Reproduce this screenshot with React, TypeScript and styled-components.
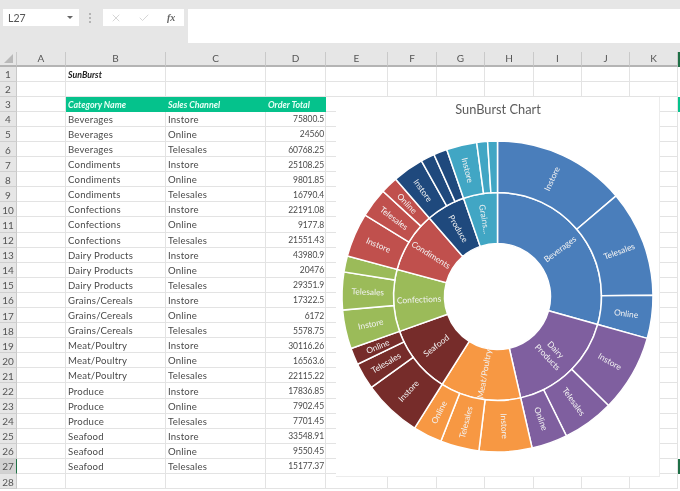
import React from "react";
import styled, { createGlobalStyle } from "styled-components";
import { X, Check } from "lucide-react";

const Global = createGlobalStyle`
  html, body { margin: 0; padding: 0; background: #fff; }
  body { font-family: "Lato", "Liberation Sans", sans-serif; overflow: hidden; }
`;

const Page = styled.div`
  width: 680px;
  height: 491px;
  overflow: hidden;
  background: #fff;
  filter: blur(0.3px);
`;

const FormulaArea = styled.div`
  height: 43px;
  padding-top: 9px;
  box-sizing: content-box;
  background: #e6e6e6;
  border-top: 1px solid #f3f3f3;
  margin-top: -1px;
  display: flex;
  align-items: flex-start;
`;

const NameBox = styled.div`
  width: 76px;
  height: 17px;
  margin-left: 3px;
  background: #fff;
  display: flex;
  align-items: center;
  justify-content: space-between;
  padding: 0 6px 0 5px;
  box-sizing: border-box;
  font-size: 10.5px;
  color: #555;
`;

const Caret = styled.span`
  width: 0;
  height: 0;
  border-left: 3px solid transparent;
  border-right: 3px solid transparent;
  border-top: 3px solid #666;
`;

const Grip = styled.div`
  width: 2px;
  height: 10px;
  margin: 4px 12px 0 10px;
  background: repeating-linear-gradient(#b4b4b4 0 2px, transparent 2px 4px);
`;

const IconBox = styled.div`
  width: 81px;
  height: 17px;
  background: #fff;
  display: flex;
  align-items: center;
  padding-left: 7px;
  gap: 16px;
  box-sizing: border-box;
  color: #c8c8c8;
`;

const Fx = styled.span`
  font-family: "Liberation Serif", serif;
  font-style: italic;
  font-weight: 700;
  font-size: 10px;
  color: #666;
  margin-left: 1px;
`;

const FormulaInput = styled.div`
  flex: 1;
  height: 34px;
  margin-left: 4px;
  background: #fff;
`;

const Sheet = styled.div`
  position: relative;
  display: grid;
  grid-template-columns: 17px 49px 100px 100px 60px 62px 49px 48px 49px 48px 48px 48px 2px;
  grid-auto-rows: 15.1px;
  grid-template-rows: 14.5px;
  color: #4a4a4a;
  font-size: 9.6px;
`;

const ColHead = styled.div`
  background: #e6e6e6;
  border-right: 1px solid #c9c9c9;
  border-bottom: 2px solid #b4b4b4;
  display: flex;
  align-items: center;
  justify-content: center;
  font-size: 10px;
  color: #555;
  box-sizing: border-box;
`;

const Corner = styled(ColHead)`
  position: relative;
`;

const CornerMark = styled.span`
  width: 0;
  height: 0;
  margin: 1px 0 0 1px;
  border-left: 9px solid transparent;
  border-bottom: 9px solid #b9b9b9;
`;

const RowHead = styled.div<{ $active?: boolean }>`
  background: ${(p) => (p.$active ? "#d2d2d2" : "#e6e6e6")};
  border-bottom: 1px solid #cfcfcf;
  border-right: 1px solid ${(p) => (p.$active ? "#1f7246" : "#c9c9c9")};
  display: flex;
  align-items: center;
  justify-content: center;
  padding-top: 1px;
  font-size: 10px;
  color: #555;
  box-sizing: border-box;
`;

const Cell = styled.div<{ $right?: boolean }>`
  border-right: 1px solid #e3e3e3;
  border-bottom: 1px solid #e3e3e3;
  padding: 1px ${(p) => (p.$right ? "1px" : "2px")} 0 2px;
  display: flex;
  align-items: center;
  justify-content: ${(p) => (p.$right ? "flex-end" : "flex-start")};
  box-sizing: border-box;
  white-space: nowrap;
  letter-spacing: ${(p) => (p.$right ? "-0.1px" : "0.2px")};
  font-size: ${(p) => (p.$right ? "8.5px" : "9.6px")};
`;

const TitleCell = styled(Cell)`
  font-weight: 700;
  font-style: italic;
  color: #222;
  letter-spacing: 0;
  font-size: 8.8px;
`;

const HeadCell = styled(Cell)`
  background: #05c28c;
  color: #e9fff6;
  border-color: #05c28c;
  font-weight: 700;
  font-style: italic;
  letter-spacing: 0;
  font-size: 8.9px;
`;

const Edge = styled.div<{ $kind?: "head" | "green" | "selected" }>`
  background: ${(p) =>
    p.$kind === "head" ? "#1f6f46" : p.$kind === "green" ? "#05c28c" : p.$kind === "selected" ? "#1f6f46" : "#fff"};
`;

const ChartCard = styled.div`
  position: absolute;
  left: 336px;
  top: 45px;
  width: 324px;
  height: 380px;
  background: #fff;
  border-right: 1px solid #ececec;
  border-bottom: 1px solid #ececec;
  box-sizing: border-box;
`;

const ChartSvg = styled.svg`
  display: block;
`;

const ChartTitle = styled.text`
  font-family: "Lato", "Liberation Sans", sans-serif;
  font-size: 12.8px;
  fill: #5c5c5c;
  text-anchor: middle;
`;

const SliceLabel = styled.text`
  font-family: "Lato", "Liberation Sans", sans-serif;
  font-size: 8.4px;
  fill: #f2f2f2;
  text-anchor: middle;
  dominant-baseline: central;
`;

type Row = [string, string, string];
const rows: Row[] = [
  ["Beverages", "Instore", "75800.5"],
  ["Beverages", "Online", "24560"],
  ["Beverages", "Telesales", "60768.25"],
  ["Condiments", "Instore", "25108.25"],
  ["Condiments", "Online", "9801.85"],
  ["Condiments", "Telesales", "16790.4"],
  ["Confections", "Instore", "22191.08"],
  ["Confections", "Online", "9177.8"],
  ["Confections", "Telesales", "21551.43"],
  ["Dairy Products", "Instore", "43980.9"],
  ["Dairy Products", "Online", "20476"],
  ["Dairy Products", "Telesales", "29351.9"],
  ["Grains/Cereals", "Instore", "17322.5"],
  ["Grains/Cereals", "Online", "6172"],
  ["Grains/Cereals", "Telesales", "5578.75"],
  ["Meat/Poultry", "Instore", "30116.26"],
  ["Meat/Poultry", "Online", "16563.6"],
  ["Meat/Poultry", "Telesales", "22115.22"],
  ["Produce", "Instore", "17836.85"],
  ["Produce", "Online", "7902.45"],
  ["Produce", "Telesales", "7701.45"],
  ["Seafood", "Instore", "33548.91"],
  ["Seafood", "Online", "9550.45"],
  ["Seafood", "Telesales", "15177.37"],
];

const columns = ["A", "B", "C", "D", "E", "F", "G", "H", "I", "J", "K"];

type Group = { name: string; lines?: string[]; color: string; hidden?: string[]; label?: string };
const groups: Group[] = [
  { name: "Beverages", color: "#4a7ebb" },
  { name: "Dairy Products", lines: ["Dairy", "Products"], color: "#7f5f9f" },
  { name: "Meat/Poultry", color: "#f79843" },
  { name: "Seafood", color: "#762c2a" },
  { name: "Confections", color: "#9bbb59", hidden: ["Online"] },
  { name: "Condiments", color: "#c0504d" },
  { name: "Produce", color: "#1f497d", hidden: ["Online", "Telesales"] },
  { name: "Grains/Cereals", label: "Grains...", color: "#41a6c4", hidden: ["Online", "Telesales"] },
];

const CX = 161.5;
const CY = 199.5;
const R0 = 53;
const R1 = 104;
const R2 = 155.5;

const polar = (r: number, a: number) => {
  const t = (a * Math.PI) / 180;
  return [CX + r * Math.sin(t), CY - r * Math.cos(t)];
};

const arc = (r0: number, r1: number, a0: number, a1: number) => {
  const [x0, y0] = polar(r1, a0);
  const [x1, y1] = polar(r1, a1);
  const [x2, y2] = polar(r0, a1);
  const [x3, y3] = polar(r0, a0);
  const large = a1 - a0 > 180 ? 1 : 0;
  return `M${x0} ${y0}A${r1} ${r1} 0 ${large} 1 ${x1} ${y1}L${x2} ${y2}A${r0} ${r0} 0 ${large} 0 ${x3} ${y3}Z`;
};

const labelTransform = (r: number, a: number) => {
  const [x, y] = polar(r, a);
  const rot = a <= 180 ? a - 90 : a - 270;
  return `translate(${x} ${y}) rotate(${rot})`;
};

const total = rows.reduce((s, r) => s + Number(r[2]), 0);

const Sunburst = () => {
  let angle = 0;
  const parts: React.ReactNode[] = [];
  groups.forEach((g) => {
    const items = rows
      .filter((r) => r[0] === g.name)
      .map((r) => ({ channel: r[1], value: Number(r[2]) }))
      .sort((a, b) => b.value - a.value);
    const sum = items.reduce((s, i) => s + i.value, 0);
    const start = angle;
    const end = start + (sum / total) * 360;
    const mid = (start + end) / 2;
    parts.push(
      <path key={g.name} d={arc(R0, R1, start, end)} fill={g.color} stroke="#fff" strokeWidth={1.5} />
    );
    parts.push(
      <SliceLabel key={g.name + "-t"} transform={labelTransform((R0 + R1) / 2, mid)}>
        {g.lines ? (
          g.lines.map((l, i) => (
            <tspan key={l} x={0} y={(i - 0.5) * 11}>
              {l}
            </tspan>
          ))
        ) : (
          g.label ?? g.name
        )}
      </SliceLabel>
    );
    let a = start;
    items.forEach((it) => {
      const b = a + (it.value / total) * 360;
      parts.push(
        <path key={g.name + it.channel} d={arc(R1, R2, a, b)} fill={g.color} stroke="#fff" strokeWidth={1.5} />
      );
      if (!g.hidden?.includes(it.channel)) {
        parts.push(
          <SliceLabel key={g.name + it.channel + "-t"} transform={labelTransform((R1 + R2) / 2, (a + b) / 2)}>
            {it.channel}
          </SliceLabel>
        );
      }
      a = b;
    });
    angle = end;
  });
  return (
    <ChartSvg width={323} height={379} viewBox="0 0 323 379">
      <ChartTitle x={162} y={17}>SunBurst Chart</ChartTitle>
      {parts}
    </ChartSvg>
  );
};

const blanks = (n: number, prefix: string) =>
  Array.from({ length: n }, (_, i) => <Cell key={prefix + i} />);

export default function App() {
  return (
    <Page>
      <Global />
      <FormulaArea>
        <NameBox>
          L27
          <Caret />
        </NameBox>
        <Grip />
        <IconBox>
          <X size={12} strokeWidth={1.5} />
          <Check size={12} strokeWidth={1.5} />
          <Fx>fx</Fx>
        </IconBox>
        <FormulaInput />
      </FormulaArea>
      <Sheet>
        <Corner>
          <CornerMark />
        </Corner>
        {columns.map((c) => (
          <ColHead key={c}>{c}</ColHead>
        ))}
        <Edge $kind="head" />

        <RowHead>1</RowHead>
        <Cell />
        <TitleCell>SunBurst</TitleCell>
        {blanks(9, "r1")}
        <Edge />

        <RowHead>2</RowHead>
        {blanks(11, "r2")}
        <Edge />

        <RowHead>3</RowHead>
        <Cell />
        <HeadCell>Category Name</HeadCell>
        <HeadCell>Sales Channel</HeadCell>
        <HeadCell>Order Total</HeadCell>
        {blanks(7, "r3")}
        <Edge $kind="green" />

        {rows.map((r, i) => {
          const n = i + 4;
          return (
            <React.Fragment key={n}>
              <RowHead $active={n === 27}>{n}</RowHead>
              <Cell />
              <Cell>{r[0]}</Cell>
              <Cell>{r[1]}</Cell>
              <Cell $right>{r[2]}</Cell>
              {blanks(7, `r${n}`)}
              <Edge $kind={n === 27 ? "selected" : undefined} />
            </React.Fragment>
          );
        })}

        <RowHead>28</RowHead>
        {blanks(11, "r28")}
        <Edge />

        <ChartCard>
          <Sunburst />
        </ChartCard>
      </Sheet>
    </Page>
  );
}
